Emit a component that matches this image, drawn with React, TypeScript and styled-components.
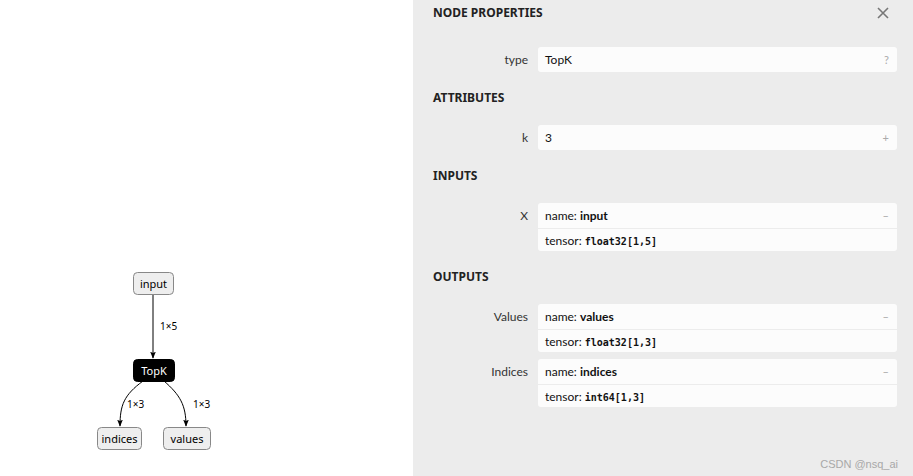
import styled, { createGlobalStyle } from 'styled-components'

const GlobalStyle = createGlobalStyle`
  html, body, #root {
    margin: 0;
    padding: 0;
    height: 100%;
  }
  body {
    font-family: "Noto Sans", "Open Sans", sans-serif;
    overflow: hidden;
  }
`

const Page = styled.div`
  display: flex;
  width: 100%;
  height: 100vh;
  position: relative;
`

const Canvas = styled.div`
  flex: 1;
  background: #ffffff;
  position: relative;
`

const GraphSvg = styled.svg`
  display: block;
  width: 413px;
  height: 476px;
  font-family: "Noto Sans", sans-serif;
`

const Panel = styled.aside`
  width: 500px;
  background: #ececec;
  padding: 0 16px 0 20px;
  box-sizing: border-box;
  color: #222;
  font-family: Lato, "Noto Sans", sans-serif;
  font-size: 12px;
`

const Header = styled.div`
  display: flex;
  align-items: center;
  justify-content: space-between;
  height: 25px;
  margin-bottom: 22px;
`

const SectionTitle = styled.div<{ $top?: number }>`
  font-family: "Noto Sans", sans-serif;
  font-size: 12px;
  font-weight: 700;
  color: #222;
  line-height: 20px;
  padding: ${({ $top }) => `${$top ?? 16}px 0 17px`};
`

const HeaderTitle = styled(SectionTitle)`
  padding: 0;
`

const CloseButton = styled.button`
  border: 0;
  background: transparent;
  padding: 0;
  margin-right: 7px;
  width: 14px;
  height: 14px;
  display: flex;
  align-items: center;
  justify-content: center;
  cursor: pointer;
`

const Row = styled.div<{ $gap?: number }>`
  display: grid;
  grid-template-columns: 95px 1fr;
  column-gap: 10px;
  margin-bottom: ${({ $gap }) => `${$gap ?? 0}px`};
`

const Label = styled.div`
  text-align: right;
  line-height: 25px;
  color: #333;
`

const Box = styled.div`
  background: #fcfcfc;
  border-radius: 3px;
  overflow: hidden;
`

const Line = styled.div`
  display: flex;
  align-items: center;
  justify-content: space-between;
  height: 25px;
  padding: 0 8px 0 7px;
  & + & {
    border-top: 1px solid #ececec;
    height: 22px;
  }
`

const Value = styled.span`
  color: #111;
  b {
    font-weight: 700;
  }
`

const Code = styled.code`
  font-family: "DejaVu Sans Mono", "Liberation Mono", monospace;
  font-size: 10px;
  font-weight: 600;
  color: #111;
`

const Toggle = styled.span`
  color: #aaa;
  font-size: 11px;
`

const Watermark = styled.div`
  position: absolute;
  right: 15px;
  bottom: 6px;
  color: #a8a8a8;
  font-family: "Liberation Sans", Arial, sans-serif;
  font-size: 11px;
`

type Node = { id: string; x: number; y: number; w: number; dark?: boolean }

const nodes: Node[] = [
  { id: 'input', x: 133, y: 272, w: 40 },
  { id: 'TopK', x: 133, y: 359, w: 41, dark: true },
  { id: 'indices', x: 97, y: 427, w: 44 },
  { id: 'values', x: 163, y: 427, w: 47 },
]

const Graph = () => (
  <GraphSvg viewBox="0 0 413 476">
    <defs>
      <marker id="arrow" viewBox="0 0 10 10" refX="9" refY="5" markerWidth="7" markerHeight="7" orient="auto">
        <path d="M0,1 L10,5 L0,9 L2,5 z" fill="#000" />
      </marker>
    </defs>
    <path d="M153,294 L153,358" stroke="#000" strokeWidth="1" fill="none" markerEnd="url(#arrow)" />
    <path d="M143,381 C124,395 120,405 120,426" stroke="#000" strokeWidth="1" fill="none" markerEnd="url(#arrow)" />
    <path d="M164,381 C180,395 186,405 186,426" stroke="#000" strokeWidth="1" fill="none" markerEnd="url(#arrow)" />
    <text x="160" y="330" fontSize="10" fill="#000">1×5</text>
    <text x="127" y="408" fontSize="10" fill="#000">1×3</text>
    <text x="193" y="408" fontSize="10" fill="#000">1×3</text>
    {nodes.map(n => (
      <g key={n.id}>
        <rect
          x={n.x + 0.5}
          y={n.y + 0.5}
          width={n.w}
          height={22}
          rx={4}
          fill={n.dark ? '#000' : '#eeeeee'}
          stroke={n.dark ? '#000' : '#888'}
          strokeWidth="1"
        />
        <text
          x={n.x + n.w / 2 + 0.5}
          y={n.y + 15.5}
          textAnchor="middle"
          fontSize="11"
          fill={n.dark ? '#fff' : '#000'}
        >
          {n.id}
        </text>
      </g>
    ))}
  </GraphSvg>
)

const App = () => (
  <Page>
    <GlobalStyle />
    <Canvas>
      <Graph />
    </Canvas>
    <Panel>
      <Header>
        <HeaderTitle>NODE PROPERTIES</HeaderTitle>
        <CloseButton aria-label="close">
          <svg width="12" height="12" viewBox="0 0 12 12">
            <path d="M1,1 L11,11 M11,1 L1,11" stroke="#777" strokeWidth="1.6" />
          </svg>
        </CloseButton>
      </Header>
      <Row>
        <Label>type</Label>
        <Box>
          <Line>
            <Value>TopK</Value>
            <Toggle>?</Toggle>
          </Line>
        </Box>
      </Row>

      <SectionTitle>ATTRIBUTES</SectionTitle>
      <Row>
        <Label>k</Label>
        <Box>
          <Line>
            <Value>3</Value>
            <Toggle>+</Toggle>
          </Line>
        </Box>
      </Row>

      <SectionTitle>INPUTS</SectionTitle>
      <Row>
        <Label>X</Label>
        <Box>
          <Line>
            <Value>name: <b>input</b></Value>
            <Toggle>–</Toggle>
          </Line>
          <Line>
            <Value>tensor: <Code>float32[1,5]</Code></Value>
          </Line>
        </Box>
      </Row>

      <SectionTitle>OUTPUTS</SectionTitle>
      <Row $gap={7}>
        <Label>Values</Label>
        <Box>
          <Line>
            <Value>name: <b>values</b></Value>
            <Toggle>–</Toggle>
          </Line>
          <Line>
            <Value>tensor: <Code>float32[1,3]</Code></Value>
          </Line>
        </Box>
      </Row>
      <Row>
        <Label>Indices</Label>
        <Box>
          <Line>
            <Value>name: <b>indices</b></Value>
            <Toggle>–</Toggle>
          </Line>
          <Line>
            <Value>tensor: <Code>int64[1,3]</Code></Value>
          </Line>
        </Box>
      </Row>
    </Panel>
    <Watermark>CSDN @nsq_ai</Watermark>
  </Page>
)

export default App
